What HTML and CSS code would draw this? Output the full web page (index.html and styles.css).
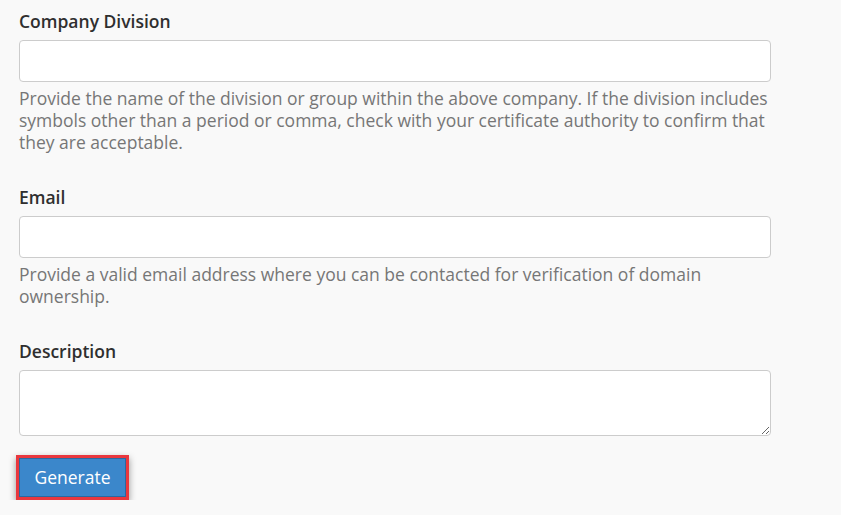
FILE: index.html
```html
<!DOCTYPE html>
<html>
<head>
<meta charset="utf-8">
<link rel="stylesheet" href="styles.css">
</head>
<body>
<form class="form">
  <div class="group">
    <label class="label" for="div">Company Division</label>
    <input class="control" id="div" type="text">
    <p class="help">Provide the name of the division or group within the above company. If the division includes symbols other than a period or comma, check with your certificate authority to confirm that they are acceptable.</p>
  </div>
  <div class="group">
    <label class="label" for="email">Email</label>
    <input class="control" id="email" type="text">
    <p class="help">Provide a valid email address where you can be contacted for verification of domain ownership.</p>
  </div>
  <div class="group last">
    <label class="label" for="desc">Description</label>
    <textarea class="control area" id="desc"></textarea>
  </div>
  <div class="actions">
    <span class="highlight"><button class="btn" type="button">Generate</button></span>
  </div>
</form>
</body>
</html>
```
FILE: styles.css
```css
html, body {
  margin: 0;
  padding: 0;
  background: #f9f9f9;
}
body {
  font-family: "Open Sans", "Liberation Sans", sans-serif;
  font-size: 17.5px;
  line-height: 22px;
  color: #333;
}
.form {
  padding: 10px 70px 0 19px;
  display: flex;
  flex-direction: column;
}
.group {
  display: flex;
  flex-direction: column;
  margin-bottom: 33px;
}
.group.last {
  margin-bottom: 19px;
}
.label {
  font-weight: 600;
  color: #2f2f2f;
  margin-bottom: 8px;
}
.control {
  box-sizing: border-box;
  width: 752px;
  height: 42px;
  border: 1px solid #cccccc;
  border-radius: 4px;
  background: #fff;
  font: inherit;
  margin: 0;
  padding: 6px 12px;
}
.area {
  height: 66px;
  resize: vertical;
  display: block;
}
.help {
  margin: 5px 0 0;
  color: #767676;
}
.actions {
  display: flex;
  margin-left: -3px;
}
.highlight {
  display: inline-flex;
  border: 3px solid #e9373e;
  box-shadow: 0 3px 7px rgba(0,0,0,0.4);
}
.btn {
  box-sizing: border-box;
  height: 39px;
  width: 107px;
  background: #3b87cb;
  border: 1px solid #2b68a0;
  color: #fff;
  font-family: "Open Sans", "Liberation Sans", sans-serif;
  font-size: 17.5px;
  line-height: 22px;
  padding: 0 0 2px;
  margin: 0;
}
```
